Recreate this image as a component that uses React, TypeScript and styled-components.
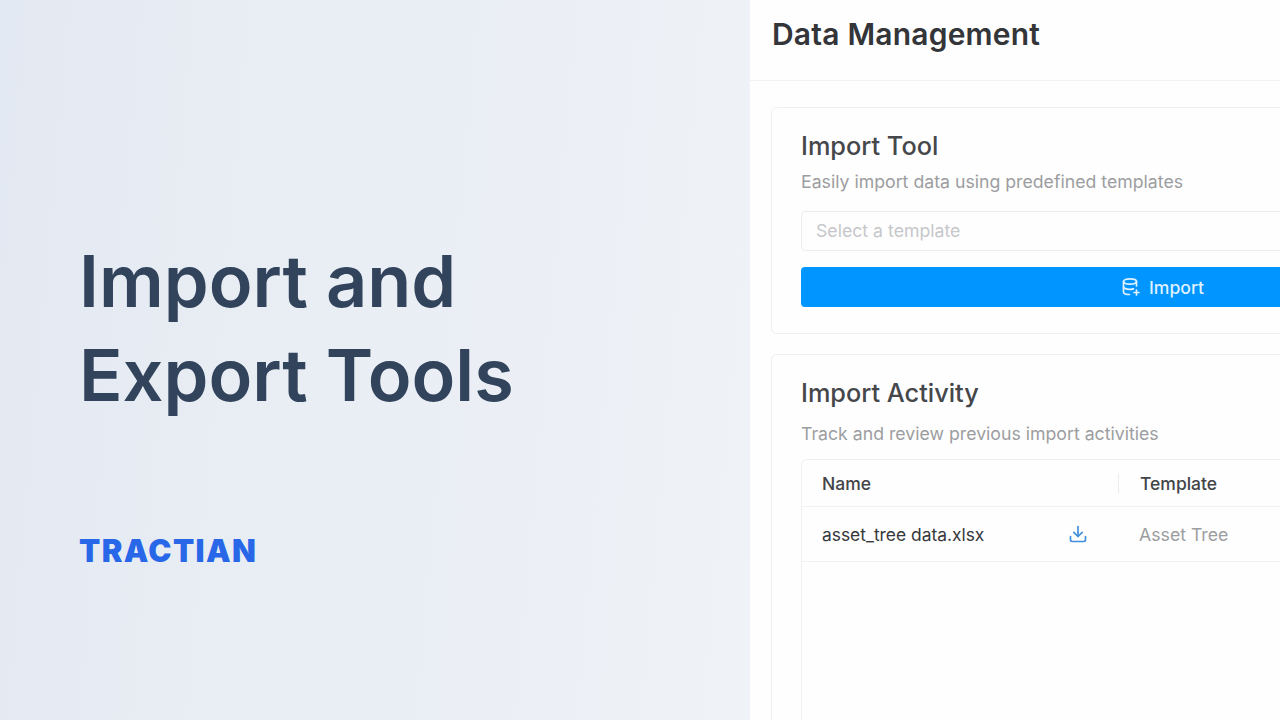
import styled, { createGlobalStyle } from "styled-components";
import { Download } from "lucide-react";

const GlobalStyle = createGlobalStyle`
	html, body {
		margin: 0;
		padding: 0;
		width: 1280px;
		height: 720px;
		overflow: hidden;
		font-family: "Inter", "Liberation Sans", sans-serif;
	}
`;

const Page = styled.div`
	width: 1280px;
	height: 720px;
	display: flex;
	overflow: hidden;
`;

const Intro = styled.section`
	width: 750px;
	flex-shrink: 0;
	box-sizing: border-box;
	padding: 234px 0 0 79px;
	background: linear-gradient(95deg, #e3e9f2 0%, #e8edf4 30%, #ebeff5 65%, #eff3f7 100%);
`;

const Headline = styled.h1`
	margin: 0;
	font-size: 72px;
	line-height: 94px;
	font-weight: 600;
	color: #32435c;
`;

const Brand = styled.div`
	margin-top: 110px;
	font-size: 31px;
	line-height: 38px;
	font-weight: 900;
	letter-spacing: 1.4px;
	color: #2867e8;
`;

const Console = styled.section`
	flex: 1;
	min-width: 0;
	overflow: hidden;
	background: #fefefe;
`;

const TopBar = styled.header`
	height: 81px;
	box-sizing: border-box;
	padding: 14px 0 0 22px;
	border-bottom: 1px solid #f2f2f3;
`;

const PageTitle = styled.h2`
	margin: 0;
	font-size: 30px;
	line-height: 40px;
	font-weight: 600;
	letter-spacing: 0.2px;
	color: #333539;
`;

const Stack = styled.div`
	display: flex;
	flex-direction: column;
	gap: 20px;
	padding: 26px 0 0 21px;
`;

const Card = styled.div<{ $height: number }>`
	width: 784px;
	height: ${(p) => p.$height}px;
	box-sizing: border-box;
	padding: 22px 30px 0 29px;
	border: 1px solid #f0f0f1;
	border-radius: 6px;
	background: #fefefe;
`;

const CardTitle = styled.h3`
	margin: 0;
	font-size: 25.3px;
	line-height: 32px;
	font-weight: 500;
	color: #45474a;
`;

const CardHint = styled.p<{ $gap: number }>`
	margin: ${(p) => p.$gap}px 0 0;
	font-size: 17.7px;
	line-height: 22px;
	color: #9c9da0;
`;

const Select = styled.div`
	margin-top: 18px;
	height: 40px;
	box-sizing: border-box;
	padding: 0 0 2px 14px;
	display: flex;
	align-items: center;
	border: 1px solid #ececee;
	border-radius: 4px;
	font-size: 17.7px;
	color: #c6c7ca;
`;

const ImportButton = styled.div`
	margin-top: 16px;
	height: 40px;
	display: flex;
	align-items: center;
	justify-content: center;
	gap: 8px;
	border-radius: 4px;
	background: #0095ff;
	color: #dff1ff;
	font-size: 17.6px;
	font-weight: 500;
`;

const Table = styled.div`
	margin-top: 14px;
	border: 1px solid #f0f0f1;
	border-radius: 6px;
	height: 400px;
`;

const Row = styled.div<{ $height: number }>`
	height: ${(p) => p.$height}px;
	box-sizing: border-box;
	display: grid;
	grid-template-columns: 316px 1fr;
	align-items: center;
	border-bottom: 1px solid #f2f2f3;
`;

const NameCell = styled.div`
	display: flex;
	align-items: center;
	justify-content: space-between;
	padding: 0 30px 0 20px;
`;

const HeadText = styled.span`
	font-size: 17.5px;
	font-weight: 500;
	color: #424448;
`;

const FileName = styled.span`
	font-size: 17.4px;
	font-weight: 400;
	color: #36383c;
`;

const TemplateHead = styled.div`
	height: 20px;
	display: flex;
	align-items: center;
	padding-left: 21px;
	border-left: 1px solid #ececee;
`;

const TemplateCell = styled.div`
	padding-left: 21px;
	font-size: 17.7px;
	color: #9c9da0;
`;

const DatabaseIcon = () => (
	<svg width="20" height="20" viewBox="0 0 20 20" fill="none" stroke="#dff1ff" strokeWidth="1.7" strokeLinecap="round">
		<ellipse cx="9" cy="4.5" rx="6.5" ry="2.6" />
		<path d="M2.5 4.5v10.5c0 1.4 2.6 2.5 6 2.5" />
		<path d="M15.5 4.5v4.5" />
		<path d="M2.5 9.8c0 1.4 2.9 2.6 6.5 2.6 1.3 0 2.5-.2 3.5-.5" />
		<path d="M15.5 13v5M13 15.5h5" />
	</svg>
);

export default function App() {
	return (
		<Page>
			<GlobalStyle />
			<Intro>
				<Headline>
					Import and
					<br />
					Export Tools
				</Headline>
				<Brand>TRACTIAN</Brand>
			</Intro>
			<Console>
				<TopBar>
					<PageTitle>Data Management</PageTitle>
				</TopBar>
				<Stack>
					<Card $height={227}>
						<CardTitle>Import Tool</CardTitle>
						<CardHint $gap={9}>Easily import data using predefined templates</CardHint>
						<Select>Select a template</Select>
						<ImportButton>
							<DatabaseIcon />
							Import
						</ImportButton>
					</Card>
					<Card $height={500}>
						<CardTitle>Import Activity</CardTitle>
						<CardHint $gap={14}>Track and review previous import activities</CardHint>
						<Table>
							<Row $height={47}>
								<NameCell>
									<HeadText>Name</HeadText>
								</NameCell>
								<TemplateHead>
									<HeadText>Template</HeadText>
								</TemplateHead>
							</Row>
							<Row $height={55}>
								<NameCell>
									<FileName>asset_tree data.xlsx</FileName>
									<Download size={20} color="#3f8fdc" strokeWidth={2} />
								</NameCell>
								<TemplateCell>Asset Tree</TemplateCell>
							</Row>
						</Table>
					</Card>
				</Stack>
			</Console>
		</Page>
	);
}
